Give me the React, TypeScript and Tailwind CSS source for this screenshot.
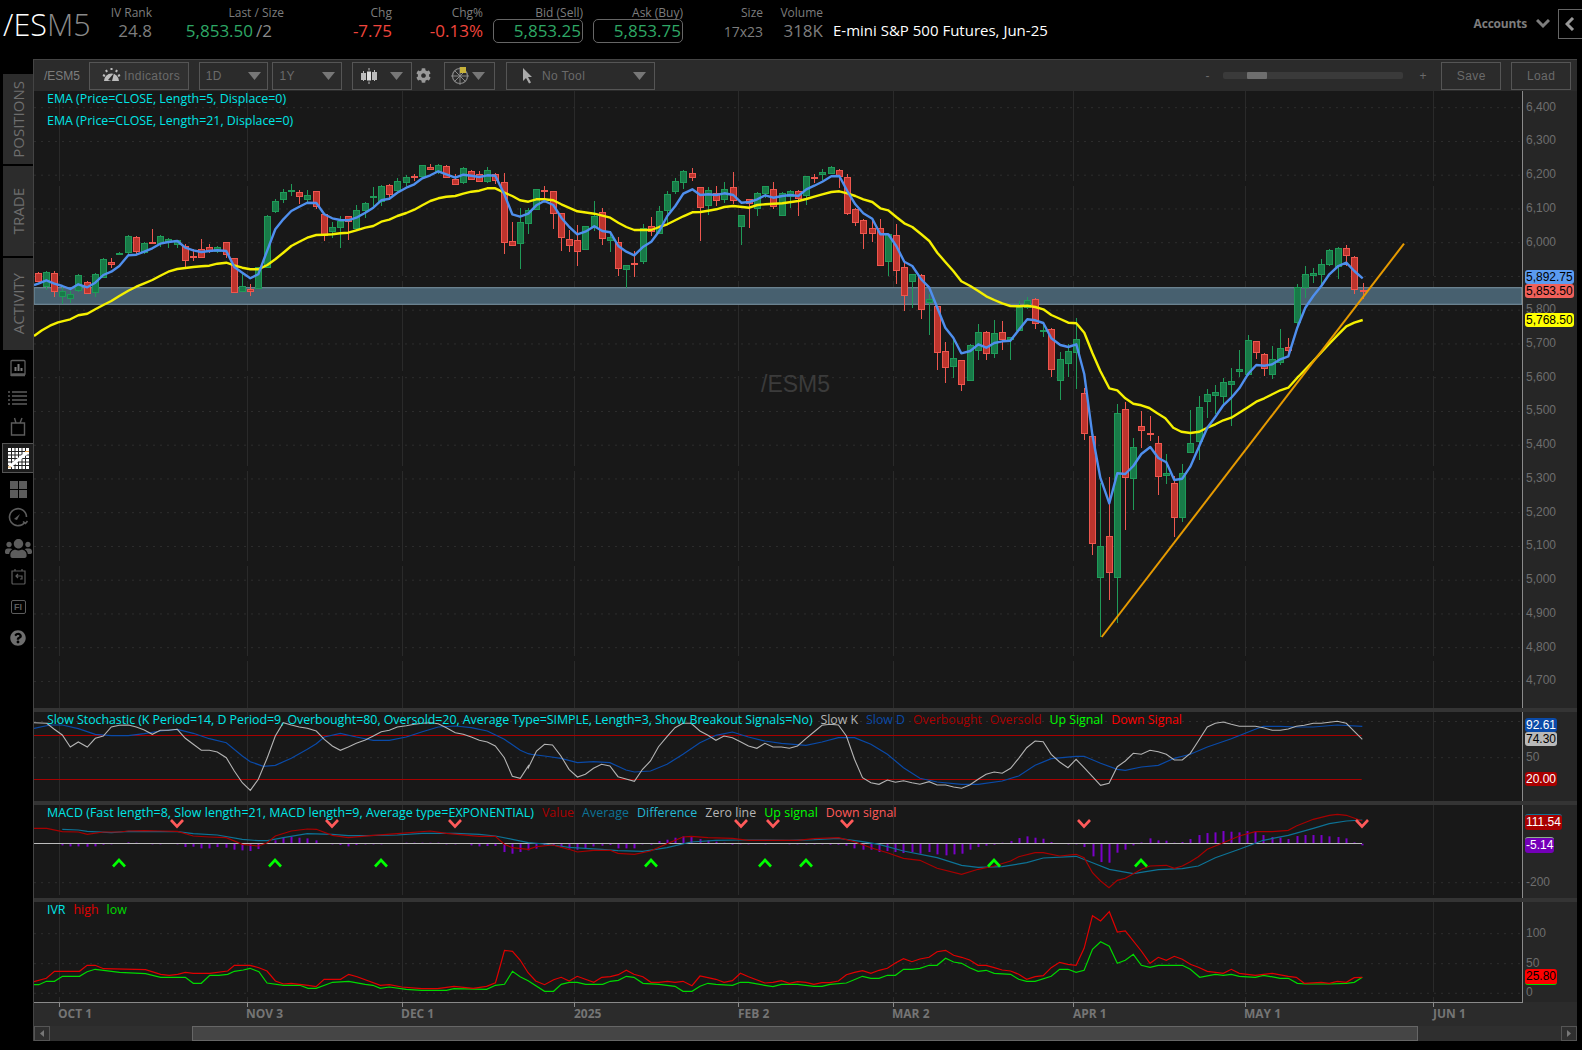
import type { ReactNode } from 'react';
import { FaCog, FaUsers, FaQuestionCircle } from 'react-icons/fa';

type Pt = [number, number];

// points were read off crops of the chart: each block has its own origin and x scale
const seg = (ox: number, oy: number, sx: number, s: string): Pt[] =>
  s.trim().split(/\s+/).map((p) => {
    const [x, y] = p.split(',').map(Number);
    return [ox + x / sx, oy + y / 3] as Pt;
  });
const line = (pts: Pt[]) => pts.map(([x, y]) => `${x.toFixed(1)},${y.toFixed(1)}`).join(' ');

type Bar = { x: number; up: boolean; t: number; b: number; hi: number; lo: number };
const bars = (ox: number, oy: number, s: string): Bar[] =>
  s.trim().split(/\s+/).map((r) => {
    const [px, c, t, b, hi, lo] = r.split(',');
    return { x: ox + Number(px) / 3, up: c === 'g', t: oy + Number(t) / 3, b: oy + Number(b) / 3, hi: oy + Number(hi) / 3, lo: oy + Number(lo) / 3 };
  });

const candles: Bar[] = [
  ...bars(30, 160, `24,r,337,362,332,362 49,g,334,376,330,386 73,r,337,391,330,407 97,g,391,406,378,428 121,g,400,412,390,425
    145,g,343,387,340,392 172,r,364,398,360,400 196,g,340,394,335,407 220,g,295,349,290,350 244,r,303,308,292,320 268,g,277,280,272,282
    295,g,226,275,222,280 319,r,229,272,226,280 343,g,246,272,243,278 367,r,243,245,205,246 391,g,226,248,222,258 415,g,235,241,232,262
    442,g,238,250,236,262 466,r,254,296,250,325 490,r,284,286,265,300 514,r,264,287,235,290 538,r,259,270,250,275 562,g,259,270,256,275
    589,r,244,280,242,290 613,r,292,394,290,396 637,g,376,392,335,392 661,r,385,391,370,405 685,g,319,382,317,382 712,g,166,320,162,322
    736,g,119,148,115,155 760,g,94,116,84,125 784,g,88,90,70,104 808,r,92,103,88,128 832,g,103,116,88,122 859,r,91,137,91,145
    883,r,160,222,160,240 907,g,199,212,183,230 931,g,181,200,165,260 955,r,166,182,165,236 979,g,148,203,132,210 1006,g,127,149,122,170
    1030,g,106,109,78,135 1054,g,76,122,72,135 1078,r,73,101,70,110 1102,g,61,88,52,95 1129,g,49,65,43,75 1153,r,44,48,40,60
    1177,g,13,46,12,50 1201,r,17,23,10,26 1225,g,12,30,10,40 1249,r,16,50,13,52 1276,r,55,70,40,72 1300,g,22,65,18,68
    1324,r,31,55,27,58 1348,r,38,59,30,62 1372,g,28,62,18,65 1396,r,38,55,35,68 1423,r,64,245,36,278 1447,r,241,254,183,255`),
  ...bars(520, 150, `0,g,213,275,170,353 25,g,178,218,170,250 49,g,115,176,115,176 73,r,116,118,105,150 100,r,121,188,121,233 124,r,187,260,187,299
    148,r,265,284,237,302 172,r,268,302,222,345 196,g,226,296,226,296 223,g,195,226,150,240 247,r,184,263,170,282 271,g,259,269,240,303
    295,r,274,352,258,375 319,g,343,356,343,411 343,r,335,337,300,378 370,g,230,328,220,338 394,r,226,242,197,255 418,g,181,247,165,250
    442,g,130,178,120,220 466,g,91,122,82,130 490,g,61,95,56,113 517,r,67,79,52,90 541,r,109,170,109,270 565,g,118,164,108,192
    589,r,127,149,105,165 613,g,115,146,92,155 640,r,109,149,63,158 664,g,193,227,193,282 688,r,145,158,145,230 712,g,127,172,123,195
    736,g,106,128,106,140 760,r,115,166,93,173 787,g,125,190,122,192 811,g,121,136,118,170 835,r,121,142,118,194 859,g,76,133,76,162
    883,r,79,81,68,95 907,g,64,71,54,88 934,g,48,67,45,70 958,r,58,76,55,110 982,r,79,188,70,192 1006,r,175,214,170,225
    1030,r,208,247,205,293 1057,r,232,248,205,272 1081,r,232,344,205,346 1105,g,250,332,250,375 1129,r,253,358,220,398 1153,r,349,433,335,480
    1177,g,370,392,370,470 1204,r,373,475,370,503 1228,g,445,455,430,552 1252,r,466,604,466,656 1276,r,601,649,574,695 1300,g,622,646,565,680
    1324,r,628,700,628,720 1351,g,583,688,580,690 1375,g,544,598,518,627 1399,r,544,607,540,626 1423,g,547,607,508,620 1447,r,544,566,511,598
    1471,g,559,565,559,627`),
  ...bars(1010, 280, `28,g,78,146,60,146 52,g,58,80,48,85 76,r,55,128,52,145 100,g,147,149,125,168 124,r,145,266,140,288 151,g,235,299,212,356
    175,g,210,245,190,288 199,g,175,215,110,324`),
  ...bars(1050, 380, `103,r,37,158,20,177 127,r,165,485,165,521 151,g,496,590,306,768 178,r,466,575,288,656 202,g,97,590,69,726 226,r,85,290,64,447
    250,g,199,293,171,387 274,r,136,149,91,201 301,r,157,161,106,180 325,r,187,287,165,342 349,g,277,284,219,309 373,r,307,410,285,468 397,g,277,410,250,423`),
  ...bars(1010, 280, `541,g,487,513,388,516 568,g,379,482,345,537 592,g,340,362,324,410 616,g,334,344,312,398 640,g,304,347,290,370 664,g,300,308,262,435
    688,g,265,272,208,288 715,g,178,281,162,285 739,r,181,215,181,233 763,r,220,262,215,285 787,g,235,281,195,293 811,g,202,245,143,252 835,r,198,208,170,220 862,g,19,125,10,145`),
  ...bars(1280, 220, `76,g,160,198,135,230 100,g,157,163,140,185 124,g,130,161,115,200 148,g,88,130,85,135 175,g,82,135,78,175 199,r,82,104,72,135 223,r,108,205,105,218 248,r,207,210,186,235`),
];

const ema5: Pt[] = [
  ...seg(30, 160, 3, `12,372 25,368 49,358 73,368 97,375 121,384 145,370 172,379 196,365 220,342 244,332 268,315 295,283 319,281 343,272 367,262 391,248 415,243 442,240 466,260 490,268 514,273 538,270 562,268 589,270 613,318 637,335 661,352 685,340 712,268 736,205 760,175 784,150 808,137 832,125 859,126 883,160 907,172 931,177 955,178 979,170 1006,155 1030,140 1054,118 1078,113 1102,95 1129,80 1153,70 1177,52 1201,43 1225,31 1249,40 1276,50 1300,41 1324,44 1348,48 1372,43 1396,44 1423,100 1447,160`),
  ...seg(520, 150, 3, `0,197 25,188 49,163 73,150 100,162 124,200 148,228 172,250 196,242 223,226 247,240 271,244 295,285 319,302 343,313 370,287 394,272 418,240 442,195 466,165 490,128 517,115 541,132 565,130 589,132 613,127 640,132 664,155 688,153 712,145 736,133 760,140 787,135 811,132 835,135 859,115 883,104 907,92 934,76 958,75 982,120 1006,160 1030,187 1057,203 1081,250 1105,250 1129,285 1153,332 1177,345 1204,385 1228,410 1252,470 1276,530 1300,560 1324,607 1351,600 1375,580 1399,590 1423,576 1447,571 1471,569`),
  ...seg(1010, 280, 3, `28,145 52,115 76,118 100,126 124,172 151,192 175,198 199,190 223,280`),
  ...seg(1050, 380, 3, `127,160 151,290 178,367 202,277 226,279 250,255 274,219 301,198 325,231 349,244 373,297 397,293 421,257 448,195 472,140 496,108 520,73`),
  ...seg(1010, 280, 3, `664,350 688,322 715,278 739,252 763,254 787,250 811,235 835,226 862,140`),
  ...seg(1280, 220, 3, `76,260 100,225 124,195 148,160 175,135 199,125 223,150 248,172`),
];

const ema21: Pt[] = [
  ...seg(30, 160, 3, `12,525 36,508 60,494 84,484 121,475 145,463 172,458 196,445 220,432 244,420 268,405 295,389 319,377 343,367 367,357 391,344 415,332 442,324 466,321 490,318 514,316 538,314 562,308 589,305 613,313 637,320 661,325 685,325 712,312 736,295 760,275 784,255 808,242 832,230 859,222 883,221 907,220 931,217 955,215 979,208 1006,200 1030,195 1054,182 1078,176 1102,165 1129,156 1153,146 1177,133 1201,120 1225,112 1249,107 1276,105 1300,98 1324,92 1348,89 1372,82 1396,82 1423,95 1447,105`),
  ...seg(520, 150, 3, `0,148 25,152 49,145 73,145 100,148 124,160 172,181 223,188 271,200 295,215 319,228 343,237 394,237 418,228 442,220 466,208 490,196 517,184 541,183 565,179 589,175 613,168 640,165 688,170 712,162 736,160 787,157 835,150 859,144 883,137 907,130 934,123 958,121 982,127 1006,135 1030,145 1057,153 1081,172 1105,178 1129,198 1153,217 1177,228 1204,250 1228,270 1252,305 1276,333 1300,360 1324,391 1351,405 1375,420 1399,436 1423,447 1447,457 1471,465`),
  ...seg(1010, 280, 3, `28,76 52,74 76,78 100,85 124,102 151,114 175,125 199,127 223,155 247,215 271,270 298,322 322,328 346,352 370,368 394,373 418,381 442,397 466,412 490,440 514,452 541,456 568,452 592,440 616,430 640,418 664,410 688,395 715,378 739,362 763,352 787,340 811,328 835,320 862,290 870,282`),
  ...seg(1280, 220, 3, `100,420 148,368 175,340 199,316 223,305 248,297`),
];

const slowK: Pt[] = [
  ...seg(30, 700, 3, `12,65 50,67 73,85 97,102 121,138 145,123 172,138 196,112 220,105 244,78 268,73 295,72 319,78 343,87 367,100 391,88 415,88 442,85 466,112 490,130 514,148 538,148 562,153 589,170 613,210 637,245 661,268 685,235 712,170 736,105 760,65 784,72 808,78 832,82 859,90 883,115 907,135 931,148 955,138 979,127 1006,117 1030,105 1054,92 1078,88 1102,78 1129,74 1153,70 1177,67 1201,65 1225,68 1249,80 1276,95 1300,100 1324,108 1348,118 1372,123 1396,135 1423,170 1447,226 1471,232 1495,195`),
  ...seg(520, 705, 2.613, `22,185 43,135 64,115 85,117 107,150 128,190 150,213 171,205 192,187 213,175 235,180 256,212 277,219 299,226 320,190 341,165 362,122 384,92 405,65 426,52 447,52 470,75 491,88 512,103 533,90 555,95 576,107 597,120 619,127 640,112 661,123 683,123 704,127 725,120 747,98 768,78 789,58 810,55 832,57 853,90 874,160 895,215 917,230 938,235 960,222 981,229 1002,224 1024,230 1045,235 1069,227 1090,237 1112,237 1133,243 1154,247 1175,237 1197,220 1218,205 1239,198 1260,202 1282,187 1303,157 1324,125 1346,105 1367,107 1388,145 1410,168 1432,185 1453,160 1474,185 1496,212 1517,238 1539,232`),
  ...seg(1100, 700, 3, `52,197 76,180 100,157 124,160 150,148 175,152 199,160 223,177 247,177 271,157 295,120 322,78 346,67 370,63 394,70 418,76 442,76 466,76 490,80 517,88 541,88 565,84 589,76 613,73 640,67 664,67 688,64 712,61 739,67 763,91 787,115`),
];
const slowD: Pt[] = [
  ...seg(30, 700, 3, `12,82 60,72 97,72 145,83 196,100 244,104 295,104 343,98 391,90 442,85 490,97 538,113 589,125 637,165 661,182 700,196 736,193 784,172 832,145 859,128 883,108 931,97 979,108 1030,118 1078,118 1129,108 1177,92 1225,78 1276,75 1324,80 1372,90 1423,115 1471,148 1495,158`),
  ...seg(520, 705, 2.613, `30,145 64,150 107,157 150,170 192,167 235,170 277,192 299,198 341,195 384,175 426,145 470,110 512,88 555,78 597,93 640,105 683,112 747,118 789,108 832,95 874,95 917,115 960,145 1002,185 1045,217 1090,228 1154,235 1197,235 1260,225 1303,210 1346,178 1388,158 1453,151 1474,151 1517,172`),
  ...seg(1100, 700, 3, `52,205 76,208 124,198 175,193 223,172 271,160 322,138 394,113 466,85 490,76 541,76 589,78 640,78 712,72 787,76`),
];

const macdValue: Pt[] = [
  ...seg(30, 700, 3, `12,382 50,382 97,392 145,393 172,400 220,393 268,393 295,390 343,389 391,390 442,391 490,405 538,408 589,410 637,430 685,435 712,425 736,405 784,390 832,384 859,385 907,403 955,410 1030,403 1102,398 1201,390 1249,397 1348,406 1396,406 1423,430 1447,440 1495,445`),
  ...seg(520, 705, 2.613, `43,422 85,417 128,430 150,438 192,433 235,433 256,442 299,445 341,435 384,413 426,393 447,391 491,395 555,397 597,403 661,403 725,403 768,398 832,395 874,407 917,425 960,440 1002,457 1045,463 1090,487 1154,505 1197,490 1239,480 1282,465 1303,452 1346,440 1367,440 1410,450 1453,445 1474,455 1496,500 1517,525 1539,545`),
  ...seg(1100, 700, 3, `52,538 76,532 124,505 150,495 199,493 223,502 247,495 271,482 295,467 322,445 370,425 418,405 466,392 517,392 565,388 589,375 640,355 688,343 712,340 739,343 787,360`),
];
const macdAvg: Pt[] = [
  ...seg(30, 700, 3, `97,385 145,387 172,391 244,395 295,391 391,392 442,392 490,398 562,402 637,415 685,419 712,419 760,410 832,398 907,400 955,404 1006,404 1102,402 1177,397 1276,397 1348,400 1396,405 1447,415 1495,425`),
  ...seg(520, 705, 2.613, `64,414 128,424 213,430 256,434 320,436 384,425 447,408 512,403 576,402 640,402 704,403 768,401 832,397 895,407 938,415 1002,435 1090,455 1154,478 1197,484 1260,482 1324,470 1367,456 1453,451 1496,470`),
  ...seg(1100, 700, 3, `28,505 100,518 175,506 247,503 295,495 346,470 418,445 490,418 565,403 640,382 688,368 739,360 787,357`),
];
const hist: Pt[] = [
  ...seg(30, 0, 3, `97,5 121,8 145,8 172,9 196,8 220,3 244,2 295,-4 319,-3 343,1 367,2 391,2 415,1 442,2 466,10 490,9 514,14 538,14 562,10 589,12 613,18 637,20 661,22 685,16 736,-10 760,-18 784,-20 808,-18 832,-16 859,-10 907,2 931,4 955,8 979,4 1006,2 1030,2 1054,2 1078,1 1102,1 1129,-3 1153,-3 1177,-3 1201,-3 1225,-3 1249,2 1276,2 1300,1 1324,5 1348,8 1372,7 1396,7 1423,25 1447,30 1471,25`),
  ...seg(520, 0, 2.613, `21,20 43,15 64,4 85,4 107,12 128,15 150,18 171,15 192,8 213,6 235,4 256,14 277,14 299,14 320,2 341,3 362,-8 384,-12 405,-18 426,-22 447,-22 470,-14 491,-10 512,-6 533,-3 555,3 576,2 597,2 619,1 640,2 661,1 683,1 704,2 725,2 747,2 768,2 789,2 810,3 832,3 853,6 874,14 895,18 917,18 938,25 960,22 981,25 1002,28 1024,25 1045,30 1069,25 1090,32 1112,35 1133,32 1154,30 1175,18 1197,10 1218,6 1239,3 1260,-3 1282,-8 1303,-17 1324,-22 1346,-18 1367,-15 1388,-5 1432,2 1453,2 1474,10 1496,38 1517,55`),
  ...seg(1100, 0, 3, `28,57 52,27 76,18 100,5 124,-4 150,-16 175,-10 199,-9 223,-3 247,-5 271,-14 297,-26 322,-32 346,-34 370,-38 394,-36 418,-34 442,-38 466,-36 490,-26 517,-20 541,-18 565,-14 592,-23 616,-26 640,-26 664,-26 688,-22 715,-20 739,-16 763,-4 787,5`),
];

const ivrHigh: Pt[] = [
  ...seg(0, 880, 2.24, `75,302 104,292 122,271 178,271 195,253 213,253 232,263 326,266 360,280 379,283 398,280 415,274 433,277 470,277 510,270 525,253 560,253 580,260 598,270 617,300 635,309 652,307 690,313 708,317 726,295 763,295 781,280 800,287 852,313 872,311 900,318 945,323 980,323 1017,316 1060,322 1090,316 1110,305 1130,208 1148,211 1165,237 1183,275 1200,300 1220,311 1240,296 1257,289 1275,300 1293,286 1330,304 1348,289 1367,287 1385,281 1403,268 1420,280 1440,287 1458,304 1476,304 1495,301 1512,304 1530,301 1550,314 1568,285`),
  ...seg(520, 705, 2.613, `491,815 512,820 533,829 555,824 576,802 597,812 640,831 661,829 683,824 704,832 725,827 747,829 768,835 789,830 810,830 832,825 853,806 874,799 895,794 917,802 938,793 960,787 981,771 1002,758 1024,767 1045,759 1069,754 1090,737 1112,733 1133,748 1154,754 1175,762 1197,778 1218,778 1239,785 1260,792 1282,795 1303,805 1324,820 1346,812 1367,809 1388,785 1410,769 1432,775 1453,778 1474,727 1496,629 1517,645`),
  ...seg(1100, 700, 3, `28,632 52,693 76,690 124,750 150,787 175,769 199,778 223,766 247,775 271,790 295,799 322,811 370,817 394,805 418,817 466,823 517,817 565,826 589,829 613,847 664,844 688,847 712,841 739,844 763,830 787,829`),
];
const ivrLow: Pt[] = [
  ...seg(0, 880, 2.24, `75,311 87,311 104,301 122,301 140,286 178,286 195,272 213,265 232,268 268,274 326,278 360,289 415,289 433,307 451,307 470,283 490,283 510,280 525,271 545,267 560,262 580,272 598,306 635,313 672,313 690,322 708,322 745,304 781,301 818,310 835,313 852,322 872,318 910,325 945,328 1000,328 1017,323 1090,325 1110,313 1130,310 1148,271 1165,287 1183,299 1220,331 1240,331 1257,310 1275,304 1293,304 1312,310 1350,310 1367,301 1385,298 1403,286 1420,289 1440,307 1476,310 1512,316 1530,331 1550,331 1568,316`),
  ...seg(520, 705, 2.613, `491,832 512,835 555,838 576,829 597,829 640,838 661,842 683,835 725,835 768,841 789,841 810,835 853,831 895,811 917,817 938,817 960,808 981,808 1002,790 1024,790 1045,787 1069,778 1090,778 1112,757 1133,768 1154,772 1175,785 1197,796 1218,793 1239,802 1282,805 1303,820 1324,826 1346,826 1388,811 1410,790 1432,790 1453,799 1474,793 1496,730 1517,707`),
  ...seg(1100, 700, 3, `28,736 52,787 76,778 100,760 124,793 150,799 175,793 247,793 271,805 299,829 346,820 370,823 394,820 418,826 466,829 490,823 541,832 565,832 592,847 616,849 688,849 739,847 763,844 787,829`),
];

const gridX = [59.5, 247.5, 402.5, 574.5, 738.5, 893.5, 1073.5, 1245.5, 1433.5];
const dates: [string, number][] = [['OCT 1', 58], ['NOV 3', 246], ['DEC 1', 401], ['2025', 574], ['FEB 2', 738], ['MAR 2', 892], ['APR 1', 1073], ['MAY 1', 1244], ['JUN 1', 1433]];
const priceY = (p: number) => 106.7 + (6400 - p) * 0.3375;
const prices = [6400, 6300, 6200, 6100, 6000, 5900, 5800, 5700, 5600, 5500, 5400, 5300, 5200, 5100, 5000, 4900, 4800, 4700];

function Grid({ y0, h, ys }: { y0: number; h: number; ys: number[] }) {
  return (
    <>
      {gridX.map((x) => (
        <line key={x} x1={x} x2={x} y1={y0} y2={y0 + h} stroke="#2a2a2a" strokeDasharray="90 5" />
      ))}
      {ys.map((y) => (
        <line key={y} x1={34} x2={1522} y1={y} y2={y} stroke="#2e2e2e" strokeDasharray="2 5" />
      ))}
    </>
  );
}

function Pane({ y0, h, chart, axis, legend }: { y0: number; h: number; chart: ReactNode; axis: ReactNode; legend?: ReactNode }) {
  return (
    <div className="relative flex shrink-0" style={{ height: h }}>
      <svg width={1488} height={h} viewBox={`34 ${y0} 1488 ${h}`} className="block shrink-0 bg-[#181818]">
        {chart}
      </svg>
      <div className="relative w-[55px] shrink-0 border-l border-[#8a8a8a] bg-[#262626] font-['Liberation_Sans',sans-serif]">{axis}</div>
      {legend}
    </div>
  );
}

function AxisText({ y, y0, children }: { y: number; y0: number; children: ReactNode }) {
  return (
    <div className="absolute left-[3px] text-[12px] leading-[14px] text-[#6e6e6e]" style={{ top: y - y0 - 8 }}>
      {children}
    </div>
  );
}

function Tag({ top, y0, tall, className, children }: { top: number; y0: number; tall?: boolean; className: string; children: ReactNode }) {
  return (
    <div className={`absolute left-[2px] rounded-[3px] px-[1px] text-[12px] leading-[14px] ${tall ? 'h-[16px]' : 'h-[14px]'} ${className}`} style={{ top: top - y0 }}>
      {children}
    </div>
  );
}

function Separator() {
  return <div className="h-[4px] shrink-0 bg-[#343434]" />;
}

function Caret() {
  return (
    <svg width="13" height="8" viewBox="0 0 13 8" className="shrink-0">
      <path d="M0 0h13L6.5 8z" fill="#777" />
    </svg>
  );
}

function ToolBox({ className, children }: { className: string; children: ReactNode }) {
  return <div className={`flex h-[28px] items-center border border-[#555] font-['Liberation_Sans',sans-serif] text-[12px] tracking-[0.4px] text-[#6a6a6a] ${className}`}>{children}</div>;
}

function Metric({ label, w, pr, children }: { label: string; w: string; pr?: string; children: ReactNode }) {
  return (
    <div className={`flex shrink-0 flex-col items-end ${w}`}>
      <div className="mt-[5px] text-[12px] leading-[16px] text-[#7d7d7d]">{label}</div>
      <div className={`mt-[-2px] flex h-[24px] items-center ${pr ?? ''}`}>{children}</div>
    </div>
  );
}

function Chevron({ x, y, up }: { x: number; y: number; up: boolean }) {
  const pts = up ? `${x - 6},${y + 3.5} ${x},${y - 3} ${x + 6},${y + 3.5}` : `${x - 6},${y - 3.5} ${x},${y + 3} ${x + 6},${y - 3.5}`;
  return <polyline points={pts} fill="none" stroke={up ? '#00ff00' : '#ff5a5a'} strokeWidth={2.6} />;
}

function Header() {
  return (
    <div className="flex h-[59px] shrink-0 items-start bg-black">
      <div className="w-[105px] shrink-0 pl-[3px] pt-[6px] text-[30.5px] font-light leading-[36px]">
        <span className="text-white">/ES</span>
        <span className="text-[#8a8a8a]">M5</span>
      </div>
      <Metric label="IV Rank" w="w-[47px]">
        <span className="text-[17px] text-[#7d7d7d]">24.8</span>
      </Metric>
      <Metric label="Last / Size" w="w-[132px]" pr="pr-[12px]">
        <span className="text-[17px] text-[#2ea866]">5,853.50</span>
        <span className="ml-[3px] text-[17px] text-[#8a8a8a]">/2</span>
      </Metric>
      <Metric label="Chg" w="w-[108px]">
        <span className="text-[17px] text-[#f0453c]">-7.75</span>
      </Metric>
      <Metric label="Chg%" w="w-[91px]">
        <span className="text-[17px] text-[#f0453c]">-0.13%</span>
      </Metric>
      <Metric label="Bid (Sell)" w="w-[100px]">
        <span className="w-[90px] rounded-[5px] border border-[#666] pr-[1px] text-right text-[17px] leading-[22px] text-[#2ea866]">5,853.25</span>
      </Metric>
      <Metric label="Ask (Buy)" w="w-[100px]">
        <span className="w-[90px] rounded-[5px] border border-[#666] pr-[1px] text-right text-[17px] leading-[22px] text-[#2ea866]">5,853.75</span>
      </Metric>
      <Metric label="Size" w="w-[80px]">
        <span className="text-[14px] text-[#7d7d7d]">17x23</span>
      </Metric>
      <Metric label="Volume" w="w-[60px]">
        <span className="text-[17px] text-[#7d7d7d]">318K</span>
      </Metric>
      <div className="ml-[10px] mt-[18px] shrink-0 text-[15px] leading-[24px] text-white">E-mini S&amp;P 500 Futures, Jun-25</div>
      <div className="ml-auto mt-[9px] flex items-center">
        <span className="text-[12px] font-bold leading-[30px] tracking-[-0.2px] text-[#7d7d7d]">Accounts</span>
        <svg width="14" height="10" viewBox="0 0 14 10" className="ml-[9px]">
          <path d="M1 1l6 6 6-6" fill="none" stroke="#7d7d7d" strokeWidth="3" />
        </svg>
        <div className="ml-[8px] flex h-[30px] w-[24px] items-center border-y border-l border-[#666] pl-[6px]">
          <svg width="10" height="14" viewBox="0 0 10 14">
            <path d="M8 1L2 7l6 6" fill="none" stroke="#999" strokeWidth="3" />
          </svg>
        </div>
      </div>
    </div>
  );
}

function SideTab({ label, h }: { label: string; h: string }) {
  return (
    <div className={`flex w-[30px] items-center justify-center bg-[#2c2c2c] text-[15px] text-[#6e6e6e] ${h}`}>
      <span className="rotate-180 [writing-mode:vertical-rl]">{label}</span>
    </div>
  );
}

function Sidebar() {
  const s = '#5c5c5c';
  return (
    <div className="flex w-[33px] shrink-0 flex-col items-end bg-black pt-[15px]">
      <SideTab label="POSITIONS" h="h-[90px]" />
      <div className="h-[2px]" />
      <SideTab label="TRADE" h="h-[90px]" />
      <div className="h-[2px]" />
      <SideTab label="ACTIVITY" h="h-[92px]" />
      <div className="flex h-[93px] w-full flex-col items-center pl-[3px]">
        <svg width="16" height="18" viewBox="0 0 16 18" className="mt-[9px]">
          <path d="M2 1.5h12a1 1 0 011 1V15H3a2 2 0 00-2 2V2.500a1 1 0 011-1zM1 16.500h14" fill="none" stroke={s} strokeWidth="1.3" />
          <path d="M4.500 12V8h2v4zM7.500 12V5h2v7zM10.500 12V9h2v3z" fill="#7a7a7a" />
        </svg>
        <svg width="20" height="16" viewBox="0 0 20 16" className="mt-[13px]">
          <path d="M0 2h2M4 2h15M0 6h2M4 6h15M0 10h2M4 10h15M0 14h2M4 14h15" stroke={s} strokeWidth="1.6" />
        </svg>
        <svg width="16" height="19" viewBox="0 0 16 19" className="mt-[11px]">
          <path d="M2 6h12.500v12H1.500V6zM6 6L4.500 1M10 6l2-5" fill="none" stroke={s} strokeWidth="1.4" />
        </svg>
      </div>
      <div className="flex h-[30px] w-[31px] items-center justify-center border border-r-0 border-[#555] bg-[#1c1c1c]">
        <svg width="21" height="21" viewBox="0 0 21 21">
          <rect width="21" height="21" fill="#fff" />
          <path d="M3.500 0v21M7 0v21M10.500 0v21M14 0v21M17.500 0v21M0 3.500h21M0 7h21M0 10.500h21M0 14h21M0 17.500h21" stroke="#222" strokeWidth="1" />
          <path d="M0 20L21 3" stroke="#fff" strokeWidth="3" />
          <path d="M17 3.500h4M0 19h3" stroke="#e8a040" strokeWidth="1" />
        </svg>
      </div>
      <div className="flex w-full flex-col items-center pl-[3px]">
        <div className="mt-[8px] grid h-[17px] w-[17px] grid-cols-2 gap-[1px]">
          <div className="bg-[#5c5c5c]" />
          <div className="bg-[#5c5c5c]" />
          <div className="bg-[#5c5c5c]" />
          <div className="bg-[#5c5c5c]" />
        </div>
        <svg width="20" height="20" viewBox="0 0 20 20" className="mt-[9px]">
          <path d="M17 15a8.500 8.500 0 111.500-5M15 14.500l2.500 2 2-2.500" fill="none" stroke={s} strokeWidth="1.6" />
          <path d="M6 12l6-5-3 6z" fill={s} />
        </svg>
        <FaUsers size={27} color="#5c5c5c" className="mt-[8px]" />
        <svg width="15" height="17" viewBox="0 0 15 17" className="mt-[6px]">
          <path d="M1 3h13v12a1 1 0 01-1 1H2a1 1 0 01-1-1zM4 3V1M11 3V1M9 11h2V8H5M7 6L5 8l2 2" fill="none" stroke={s} strokeWidth="1.2" />
        </svg>
        <div className="mt-[15px] flex h-[14px] w-[15px] items-center justify-center rounded-[2px] border border-[#5c5c5c] font-['Liberation_Sans',sans-serif] text-[9px] font-bold leading-none text-[#5c5c5c]">FI</div>
        <FaQuestionCircle size={16} color="#6e6e6e" className="mt-[16px]" />
      </div>
    </div>
  );
}

function Toolbar() {
  return (
    <div className="flex h-[31px] shrink-0 items-center bg-[#2b2b2b] pl-[10px] pr-[6px]">
      <span className="w-[45px] shrink-0 font-['Liberation_Sans',sans-serif] text-[12px] text-[#7d7d7d]">/ESM5</span>
      <ToolBox className="w-[100px] bg-[#303030] pl-[12px]">
        <svg width="19" height="17" viewBox="0 0 19 17" className="mr-[3px] shrink-0">
          <path d="M2 14a7.500 7.500 0 1115 0z" fill="#bdbdbd" />
          <path d="M1 8l2 1M4 3l1 2M9.500 1v2M15 3l-1 2M18 8l-2 1" stroke="#bdbdbd" strokeWidth="2" />
          <path d="M6 13l6-7-2 8z" fill="#2b2b2b" />
        </svg>
        Indicators
      </ToolBox>
      <ToolBox className="ml-[10px] w-[70px] justify-between px-[6px]">1D<Caret /></ToolBox>
      <ToolBox className="ml-[4px] w-[70px] justify-between px-[6px]">1Y<Caret /></ToolBox>
      <ToolBox className="ml-[10px] w-[60px] justify-between pl-[7px] pr-[8px]">
        <svg width="18" height="16" viewBox="0 0 18 16">
          <path d="M3.500 3v10M9 0v16M14.500 2v11" stroke="#bbb" />
          <path d="M1 5h5v7H1zM12 4h5v8h-5z" fill="#bbb" />
          <path d="M6.500 3h5v10h-5z" fill="#ddd" stroke="#2b2b2b" />
        </svg>
        <Caret />
      </ToolBox>
      <FaCog size={15} color="#999" className="ml-[4px] shrink-0" />
      <ToolBox className="ml-[13px] w-[51px] pl-[6px]">
        <svg width="18" height="20" viewBox="0 0 18 20" className="mr-[3px] shrink-0">
          <circle cx="9" cy="10" r="7.500" fill="none" stroke="#888" strokeWidth="1.2" />
          <path d="M9 1v18M0 10h18M4 5l10 10M14 5L4 15" stroke="#888" />
          <rect x="9" y="1" width="6" height="6" fill="#c7b23a" />
        </svg>
        <Caret />
      </ToolBox>
      <ToolBox className="ml-[11px] w-[150px] pl-[15px] pr-[8px]">
        <svg width="11" height="17" viewBox="0 0 11 17" className="mr-[9px] shrink-0">
          <path d="M1 1v13l3-3 3 5.500 2-1-3-5.500h4z" fill="#aaa" />
        </svg>
        No Tool
        <span className="ml-auto"><Caret /></span>
      </ToolBox>
      <span className="ml-[550px] w-[18px] shrink-0 font-['Liberation_Sans',sans-serif] text-[12px] text-[#6a6a6a]">-</span>
      <div className="flex h-[7px] w-[180px] shrink-0 rounded-[2px] bg-[#3a3a3a] pl-[24px]">
        <div className="h-full w-[20px] rounded-[1px] bg-[#6e6e6e]" />
      </div>
      <span className="ml-[16px] w-[20px] shrink-0 font-['Liberation_Sans',sans-serif] text-[12px] text-[#6a6a6a]">+</span>
      <ToolBox className="ml-[2px] w-[60px] justify-center bg-[#2b2b2b]">Save</ToolBox>
      <ToolBox className="ml-[10px] w-[60px] justify-center bg-[#2b2b2b]">Load</ToolBox>
    </div>
  );
}

function Legend({ top, fit, items }: { top: string; fit?: string; items: [string, string][] }) {
  return (
    <div className={`absolute left-[13px] flex gap-[8px] whitespace-nowrap text-[12.4px] leading-[16px] ${top} ${fit ?? ''}`}>
      {items.map(([t, c]) => (
        <span key={t} className={c}>{t}</span>
      ))}
    </div>
  );
}

function PriceChart() {
  return (
    <>
      <Grid y0={90} h={617} ys={prices.map(priceY)} />
      <rect x={34} y={286.7} width={1488} height={16.6} fill="#47606f" stroke="#7d98a8" />
      {candles.map((c, i) => {
        const col = c.up ? '#1f9a58' : '#ee574f';
        const x = Math.round(c.x);
        return (
          <g key={i} shapeRendering="crispEdges">
            <line x1={x + 0.5} x2={x + 0.5} y1={c.hi} y2={c.lo} stroke={col} />
            <rect x={x - 2.5} y={Math.round(c.t) + 0.5} width={6} height={Math.max(1, Math.round(c.b - c.t))} fill={c.up ? '#187a48' : '#bd342d'} stroke={col} />
          </g>
        );
      })}
      <polyline points={line(ema21)} fill="none" stroke="#f5f000" strokeWidth={2.4} strokeLinejoin="round" />
      <polyline points={line(ema5)} fill="none" stroke="#4f8fee" strokeWidth={2.4} strokeLinejoin="round" />
      <line x1={1101.7} y1={636} x2={1404} y2={242.7} stroke="#e69a00" strokeWidth={2} />
    </>
  );
}

export default function App() {
  return (
    <div className="flex h-[1050px] w-[1582px] flex-col overflow-hidden bg-black font-['Open_Sans',sans-serif]">
      <Header />
      <div className="flex min-h-0 flex-1 items-start">
        <Sidebar />
        <div className="flex w-[1544px] shrink-0 flex-col border-l border-t border-[#444] bg-[#2b2b2b]">
          <Toolbar />
          <Pane
            y0={90}
            h={617}
            chart={<PriceChart />}
            legend={
              <>
                <Legend top="top-[0px]" items={[['EMA (Price=CLOSE, Length=5, Displace=0)', 'text-[#00e5e5]']]} />
                <Legend top="top-[22px]" items={[['EMA (Price=CLOSE, Length=21, Displace=0)', 'text-[#00e5e5]']]} />
                <div className="absolute left-[727px] top-[280px] font-['Liberation_Sans',sans-serif] text-[23px] leading-[26px] text-[#3b3b3b]">/ESM5</div>
              </>
            }
            axis={
              <>
                {prices.filter((p) => p !== 5900).map((p) => (
                  <AxisText key={p} y={priceY(p)} y0={90}>{p.toLocaleString('en-US')}</AxisText>
                ))}
                <Tag top={269} y0={90} className="bg-[#5b9bf0] text-black">5,892.75</Tag>
                <Tag top={283} y0={90} className="bg-[#f0605a] text-black">5,853.50</Tag>
                <Tag top={312} y0={90} className="bg-[#ffff00] text-black">5,768.50</Tag>
              </>
            }
          />
          <Separator />
          <Pane
            y0={711}
            h={89}
            chart={
              <>
                <Grid y0={711} h={89} ys={[720.5, 756.7]} />
                <line x1={34} x2={1361.7} y1={734.5} y2={734.5} stroke="#a80000" />
                <line x1={34} x2={1361.7} y1={778.5} y2={778.5} stroke="#a80000" />
                <polyline points={line(slowD)} fill="none" stroke="#0a4aa8" strokeWidth={1.2} />
                <polyline points={line(slowK)} fill="none" stroke="#b4b4b4" strokeWidth={1.1} />
              </>
            }
            legend={
              <Legend
                top="top-[0px]"
                fit="tracking-[-0.04px]"
                items={[
                  ['Slow Stochastic (K Period=14, D Period=9, Overbought=80, Oversold=20, Average Type=SIMPLE, Length=3, Show Breakout Signals=No)', 'text-[#00e5e5]'],
                  ['Slow K', 'text-[#b4b4b4]'],
                  ['Slow D', 'text-[#0a4aa8]'],
                  ['Overbought', 'text-[#a80000]'],
                  ['Oversold', 'text-[#a80000]'],
                  ['Up Signal', 'text-[#00ff00]'],
                  ['Down Signal', 'text-[#ff0000]'],
                ]}
              />
            }
            axis={
              <>
                <AxisText y={756.7} y0={711}>50</AxisText>
                <Tag top={717} y0={711} className="bg-[#0a4aa8] text-white">92.61</Tag>
                <Tag top={731} y0={711} className="bg-[#b9b9b9] text-black">74.30</Tag>
                <Tag top={771} y0={711} className="bg-[#a80000] text-white">20.00</Tag>
              </>
            }
          />
          <Separator />
          <Pane
            y0={804}
            h={93}
            chart={
              <>
                <Grid y0={804} h={93} ys={[881.7]} />
                {hist.map(([x, h], i) => (
                  <rect key={i} x={Math.round(x) - 0.5} y={h > 0 ? 842.7 : 842.7 + h} width={2} height={Math.abs(h)} fill="#7a00c8" />
                ))}
                <line x1={34} x2={1362} y1={842.5} y2={842.5} stroke="#bdbdbd" />
                <polyline points={line(macdAvg)} fill="none" stroke="#0d7396" strokeWidth={1.2} />
                <polyline points={line(macdValue)} fill="none" stroke="#a80000" strokeWidth={1.2} />
                {[119, 275, 381, 651, 765, 806, 994, 1141].map((x) => (
                  <Chevron key={x} x={x} y={862} up />
                ))}
                {[177, 332, 455, 741, 773, 847, 1084, 1362].map((x) => (
                  <Chevron key={x} x={x} y={822.5} up={false} />
                ))}
              </>
            }
            legend={
              <Legend
                top="top-[0px]"
                fit="tracking-[0.04px]"
                items={[
                  ['MACD (Fast length=8, Slow length=21, MACD length=9, Average type=EXPONENTIAL)', 'text-[#00e5e5]'],
                  ['Value', 'text-[#a80000]'],
                  ['Average', 'text-[#0d7396]'],
                  ['Difference', 'text-[#25b7d3]'],
                  ['Zero line', 'text-[#b4b4b4]'],
                  ['Up signal', 'text-[#00ff00]'],
                  ['Down signal', 'text-[#ff5a5a]'],
                ]}
              />
            }
            axis={
              <>
                <AxisText y={881.7} y0={804}>-200</AxisText>
                <Tag top={813} y0={804} tall className="border-t border-[#0d7396] bg-[#a80000] text-white">111.54</Tag>
                <Tag top={836} y0={804} tall className="border-t border-[#8fae8f] bg-[#7400b8] text-white">-5.14</Tag>
              </>
            }
          />
          <Separator />
          <Pane
            y0={901}
            h={100}
            chart={
              <>
                <Grid y0={901} h={100} ys={[932.7, 962.7, 992.3]} />
                <polyline points={line(ivrLow)} fill="none" stroke="#00d800" strokeWidth={1.2} />
                <polyline points={line(ivrHigh)} fill="none" stroke="#e00000" strokeWidth={1.2} />
              </>
            }
            legend={
              <Legend
                top="top-[0px]"
                items={[
                  ['IVR', 'text-[#00e5e5]'],
                  ['high', 'text-[#e00000]'],
                  ['low', 'text-[#00d800]'],
                ]}
              />
            }
            axis={
              <>
                <AxisText y={932.7} y0={901}>100</AxisText>
                <AxisText y={962.7} y0={901}>50</AxisText>
                <AxisText y={992.3} y0={901}>0</AxisText>
                <Tag top={968} y0={901} tall className="border-b border-[#00d800] bg-[#ff0000] text-black">25.80</Tag>
              </>
            }
          />
          <div className="flex h-[24px] shrink-0 bg-[#2b2b2b]">
            <svg width={1489} height={24} viewBox="34 0 1489 24" className="block shrink-0">
              <line x1={34} x2={1522} y1={0.5} y2={0.5} stroke="#8a8a8a" />
              <line x1={1522.5} x2={1522.5} y1={0} y2={1} stroke="#8a8a8a" />
              {gridX.map((x) => (
                <line key={x} x1={x} x2={x} y1={0} y2={5} stroke="#8a8a8a" />
              ))}
              {dates.map(([t, x]) => (
                <text key={t} x={x} y={16} fill="#757575" fontSize={12} fontWeight={700} fontFamily="'Open Sans', sans-serif">{t}</text>
              ))}
            </svg>
          </div>
          <div className="flex h-[15px] shrink-0 items-stretch bg-[#2f2f2f]">
            <div className="flex w-[16px] shrink-0 items-center justify-center border border-[#555]">
              <svg width="4" height="7" viewBox="0 0 4 7"><path d="M4 0v7L0 3.500z" fill="#777" /></svg>
            </div>
            <div className="ml-[142px] w-[1226px] shrink-0 border border-[#666] bg-[#454545]" />
            <div className="ml-auto flex w-[16px] shrink-0 items-center justify-center border border-[#555]">
              <svg width="4" height="7" viewBox="0 0 4 7"><path d="M0 0v7l4-3.500z" fill="#777" /></svg>
            </div>
          </div>
        </div>
      </div>
    </div>
  );
}
